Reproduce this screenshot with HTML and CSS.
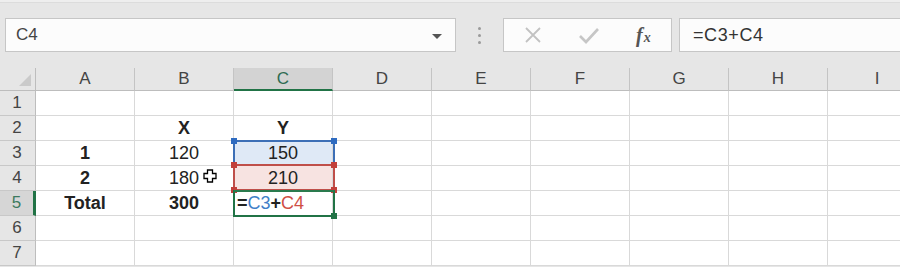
FILE: index.html
```html
<!DOCTYPE html>
<html>
<head>
<meta charset="utf-8">
<link rel="stylesheet" href="styles.css">
</head>
<body>
<div class="topbar">
  <div class="namebox">
    <span class="name-text">C4</span>
    <span class="dropdown"></span>
  </div>
  <div class="grip"><i></i><i></i><i></i></div>
  <div class="btnbox">
    <svg class="ico" width="18" height="16" viewBox="0 0 18 16"><path d="M2 1 L16 15 M16 1 L2 15" stroke="#c2c2c2" stroke-width="1.8" fill="none"/></svg>
    <svg class="ico" width="22" height="18" viewBox="0 0 22 18"><path d="M2 9 L8 15 L20 2" stroke="#c6c6c6" stroke-width="2.6" fill="none"/></svg>
    <span class="fx"><span class="f">f</span><span class="x">x</span></span>
  </div>
  <div class="formula">=C3+C4</div>
</div>
<div class="sheet">
  <div class="grid">
    <div class="hd corner"><span class="tri"></span></div>
    <div class="hd col">A</div>
    <div class="hd col">B</div>
    <div class="hd col active-col">C</div>
    <div class="hd col">D</div>
    <div class="hd col">E</div>
    <div class="hd col">F</div>
    <div class="hd col">G</div>
    <div class="hd col">H</div>
    <div class="hd col">I</div>

    <div class="hd row">1</div>
    <div class="c"></div><div class="c"></div><div class="c"></div><div class="c"></div><div class="c"></div><div class="c"></div><div class="c"></div><div class="c"></div><div class="c"></div>

    <div class="hd row">2</div>
    <div class="c"></div><div class="c b">X</div><div class="c b">Y</div><div class="c"></div><div class="c"></div><div class="c"></div><div class="c"></div><div class="c"></div><div class="c"></div>

    <div class="hd row">3</div>
    <div class="c b">1</div><div class="c">120</div><div class="c fill-blue">150</div><div class="c"></div><div class="c"></div><div class="c"></div><div class="c"></div><div class="c"></div><div class="c"></div>

    <div class="hd row">4</div>
    <div class="c b">2</div><div class="c">180</div><div class="c fill-red">210</div><div class="c"></div><div class="c"></div><div class="c"></div><div class="c"></div><div class="c"></div><div class="c"></div>

    <div class="hd row active-row">5</div>
    <div class="c b">Total</div><div class="c b">300</div><div class="c left"><span>=</span><span class="ref-blue">C3</span><span>+</span><span class="ref-red">C4</span></div><div class="c"></div><div class="c"></div><div class="c"></div><div class="c"></div><div class="c"></div><div class="c"></div>

    <div class="hd row">6</div>
    <div class="c"></div><div class="c"></div><div class="c"></div><div class="c"></div><div class="c"></div><div class="c"></div><div class="c"></div><div class="c"></div><div class="c"></div>

    <div class="hd row">7</div>
    <div class="c"></div><div class="c"></div><div class="c"></div><div class="c"></div><div class="c"></div><div class="c"></div><div class="c"></div><div class="c"></div><div class="c"></div>
  </div>

  <div class="rng rng-blue"><i class="h tl"></i><i class="h tr"></i></div>
  <div class="rng rng-red"><i class="h tl"></i><i class="h tr"></i><i class="h bl"></i><i class="h br"></i></div>
  <div class="rng rng-green"><i class="h br"></i></div>

  <svg class="cursor" width="14" height="14" viewBox="0 0 14 14">
    <path d="M4.5 1 H9.5 V4.5 H13 V9.5 H9.5 V13 H4.5 V9.5 H1 V4.5 H4.5 Z" fill="#fff" stroke="#000" stroke-width="1.3"/>
  </svg>
</div>
</body>
</html>
```

FILE: styles.css
```css
* { box-sizing: border-box; }
html, body {
  margin: 0;
  padding: 0;
}
body {
  width: 900px;
  height: 267px;
  overflow: hidden;
  background: #e6e6e6;
  font-family: "Liberation Sans", Arial, sans-serif;
  color: #222;
}
.topbar {
  height: 68px;
  display: flex;
  align-items: flex-start;
  padding-top: 18px;
  border-top: 2px solid #eeeeee;
  box-shadow: inset 0 1px 0 #dcdcdc;
  white-space: nowrap;
}
.topbar > div { margin-top: -2px; }
.namebox {
  margin-left: 5px;
  width: 451px;
  height: 34px;
  background: #fcfcfc;
  border: 1px solid #c6c6c6;
  display: flex;
  align-items: center;
  justify-content: space-between;
  padding: 0 13px 0 10px;
}
.name-text {
  font-size: 17px;
  color: #444;
}
.dropdown {
  width: 0;
  height: 0;
  border-left: 5px solid transparent;
  border-right: 5px solid transparent;
  border-top: 5px solid #555;
  margin-top: 2px;
}
.grip {
  width: 47px;
  height: 34px;
  display: flex;
  flex-direction: column;
  align-items: center;
  justify-content: center;
  gap: 4px;
}
.grip i {
  display: block;
  width: 3px;
  height: 3px;
  border-radius: 50%;
  background: #9a9a9a;
}
.btnbox {
  width: 169px;
  height: 34px;
  background: #fcfcfc;
  border: 1px solid #c6c6c6;
  display: flex;
  align-items: center;
  padding-left: 20px;
}
.btnbox .ico:first-child { margin-right: 36px; }
.btnbox .ico:nth-child(2) { margin-right: 36px; margin-top: 1px; }
.fx {
  font-family: "Liberation Serif", "Times New Roman", serif;
  font-style: italic;
  font-weight: bold;
  color: #555;
  line-height: 1;
}
.fx .f { font-size: 20px; }
.fx .x { font-size: 14px; margin-left: 1px; }
.formula {
  margin-left: 7px;
  flex: 1;
  height: 34px;
  background: #fcfcfc;
  border: 1px solid #c6c6c6;
  border-right: none;
  display: flex;
  align-items: center;
  padding-left: 13px;
  font-size: 18px;
  letter-spacing: 0.6px;
  color: #333;
}

.sheet {
  position: relative;
}
.grid {
  display: grid;
  grid-template-columns: 36px repeat(9, 99px);
  grid-template-rows: 23px repeat(7, 25px);
  background: #fff;
}
.hd {
  background: #e6e6e6;
  color: #444;
  font-size: 17px;
  display: flex;
  align-items: center;
  justify-content: center;
}
.col {
  border-right: 1px solid #c4c4c4;
  border-bottom: 1px solid #bdbdbd;
}
.corner {
  border-right: 1px solid #bdbdbd;
  border-bottom: 1px solid #bdbdbd;
  position: relative;
}
.tri {
  position: absolute;
  right: 4px;
  bottom: 4px;
  width: 0;
  height: 0;
  border-left: 12px solid transparent;
  border-bottom: 12px solid #cacaca;
}
.active-col {
  background: #d3d3d3;
  color: #2e6b52;
  border-bottom: 2px solid #217346;
}
.row {
  border-right: 1px solid #bdbdbd;
  border-bottom: 1px solid #c8c8c8;
  padding-right: 1px;
}
.active-row {
  background: #d6d6d6;
  color: #3d7a5e;
  border-right: 3px solid #217346;
  padding-right: 0;
}
.c {
  border-right: 1px solid #d9d9d9;
  border-bottom: 1px solid #d9d9d9;
  font-size: 18px;
  color: #222;
  display: flex;
  align-items: center;
  justify-content: center;
}
.b { font-weight: bold; }
.left {
  justify-content: flex-start;
  padding-left: 3px;
}
.left span:first-child, .left span:nth-child(3) { font-weight: bold; color: #222; }
.ref-blue { color: #3f7fc8; }
.ref-red { color: #cf4f45; }
.fill-blue { background: #dfe9f6; }
.fill-red { background: #f7e3e1; }

.rng {
  position: absolute;
  left: 233px;
  width: 102px;
  border: 2px solid;
}
.rng-blue { top: 72px; height: 26px; border-color: #3d6fb6; }
.rng-red { top: 96px; height: 27px; border-color: #bf4f4a; }
.rng-green { top: 122px; height: 27px; border-color: #217346; border-top-color: #2a7a4e; }
.h {
  position: absolute;
  width: 6px;
  height: 6px;
}
.rng-blue .h { background: #2f6bc0; }
.rng-red .h { background: #c2403b; }
.rng-green .h { background: #217346; }
.tl { left: -4px; top: -4px; }
.tr { right: -4px; top: -4px; }
.bl { left: -4px; bottom: -4px; }
.br { right: -4px; bottom: -4px; }
.cursor {
  position: absolute;
  left: 203px;
  top: 101px;
}
```
